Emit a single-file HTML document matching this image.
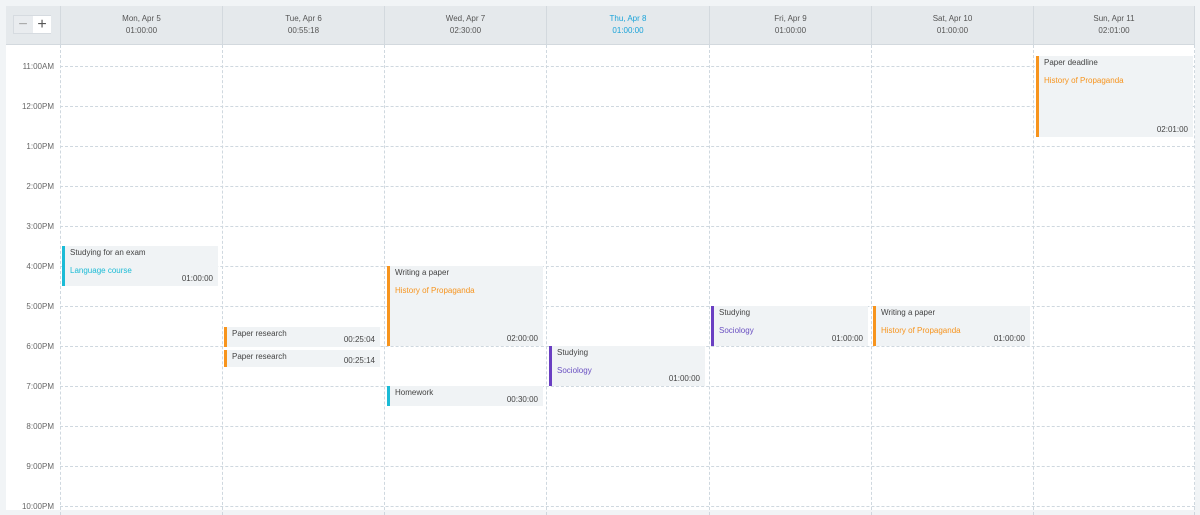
<!DOCTYPE html>
<html><head><style>
body{margin:0;width:1200px;height:510px;overflow:hidden;background:#f1f4f6;font-family:"Liberation Sans",sans-serif;position:relative}
.wrap{position:absolute;left:6px;top:6px;width:1189px;height:504px;background:#fff}
.hdr{position:absolute;left:0;top:0;width:1189px;height:38px;background:#e5e9ec;border-bottom:1px solid #d3d9de}
.hc{position:absolute;top:0;height:38px;border-left:1px solid #d3d9de;text-align:center;font-size:8px;color:#555;line-height:12px;padding-top:7px;box-sizing:border-box}
.hc.t{color:#1aa3d9}
.vl{position:absolute;top:39px;height:470px;border-left:1px dashed #cfd8df}
.hl{position:absolute;left:54px;width:1135px;border-top:1px dashed #cfd8df}
.tl{position:absolute;left:0;width:48px;text-align:right;font-size:8px;color:#666}
.ev{position:absolute;background:#f0f3f5;box-sizing:border-box;border-left:3px solid;font-size:8px;color:#444}
.ev .a{position:absolute;left:5px;top:2px}
.ev .b{position:absolute;left:5px;top:20px}
.ev .d{position:absolute;right:5px;bottom:3px}
.o{border-color:#f7941d}.o .b{color:#f7941d}
.c{border-color:#1bbbd6}.c .b{color:#1bbbd6}
.p{border-color:#6a3fc2}.p .b{color:#6a50c2}
.zm{position:absolute;left:7px;top:9px;width:38px;height:19px;border:1px solid #d6dbe0;background:#e9ecef;box-sizing:border-box}
.zm span{position:absolute;top:0;width:18px;height:17px;text-align:center;line-height:17px;font-size:16px}
</style></head><body>
<div class="wrap">
<div class="hdr">
<div class="zm"><span style="left:0;color:#aaa">−</span><span style="left:19px;background:#fff;color:#555">+</span></div>
<div class="hc" style="left:54px;width:162px">Mon, Apr 5<br>01:00:00</div>
<div class="hc" style="left:216px;width:162px">Tue, Apr 6<br>00:55:18</div>
<div class="hc" style="left:378px;width:162px">Wed, Apr 7<br>02:30:00</div>
<div class="hc t" style="left:540px;width:163px">Thu, Apr 8<br>01:00:00</div>
<div class="hc" style="left:703px;width:162px">Fri, Apr 9<br>01:00:00</div>
<div class="hc" style="left:865px;width:162px">Sat, Apr 10<br>01:00:00</div>
<div class="hc" style="left:1027px;width:162px;border-right:1px solid #d3d9de">Sun, Apr 11<br>02:01:00</div>
</div>
<div class="vl" style="left:54px"></div><div class="vl" style="left:216px"></div><div class="vl" style="left:378px"></div><div class="vl" style="left:540px"></div><div class="vl" style="left:703px"></div><div class="vl" style="left:865px"></div><div class="vl" style="left:1027px"></div><div class="vl" style="left:1188px"></div>
<div class="hl" style="top:60px"></div><div class="hl" style="top:100px"></div><div class="hl" style="top:140px"></div><div class="hl" style="top:180px"></div><div class="hl" style="top:220px"></div><div class="hl" style="top:260px"></div><div class="hl" style="top:300px"></div><div class="hl" style="top:340px"></div><div class="hl" style="top:380px"></div><div class="hl" style="top:420px"></div><div class="hl" style="top:460px"></div><div class="hl" style="top:500px"></div>
<div class="tl" style="top:56px">11:00AM</div><div class="tl" style="top:96px">12:00PM</div><div class="tl" style="top:136px">1:00PM</div><div class="tl" style="top:176px">2:00PM</div><div class="tl" style="top:216px">3:00PM</div><div class="tl" style="top:256px">4:00PM</div><div class="tl" style="top:296px">5:00PM</div><div class="tl" style="top:336px">6:00PM</div><div class="tl" style="top:376px">7:00PM</div><div class="tl" style="top:416px">8:00PM</div><div class="tl" style="top:456px">9:00PM</div><div class="tl" style="top:496px">10:00PM</div>
</div>
<div class="ev o" style="left:1036px;top:56px;width:157px;height:81px"><span class="a">Paper deadline</span><span class="b">History of Propaganda</span><span class="d">02:01:00</span></div>
<div class="ev c" style="left:62px;top:246px;width:156px;height:40px"><span class="a">Studying for an exam</span><span class="b">Language course</span><span class="d">01:00:00</span></div>
<div class="ev o" style="left:224px;top:327px;width:156px;height:20px"><span class="a">Paper research</span><span class="d">00:25:04</span></div>
<div class="ev o" style="left:224px;top:350px;width:156px;height:17px"><span class="a" style="top:2px">Paper research</span><span class="d" style="bottom:2px">00:25:14</span></div>
<div class="ev o" style="left:387px;top:266px;width:156px;height:80px"><span class="a">Writing a paper</span><span class="b">History of Propaganda</span><span class="d">02:00:00</span></div>
<div class="ev c" style="left:387px;top:386px;width:156px;height:20px"><span class="a">Homework</span><span class="d" style="bottom:2px">00:30:00</span></div>
<div class="ev p" style="left:549px;top:346px;width:156px;height:40px"><span class="a">Studying</span><span class="b">Sociology</span><span class="d">01:00:00</span></div>
<div class="ev p" style="left:711px;top:306px;width:157px;height:40px"><span class="a">Studying</span><span class="b">Sociology</span><span class="d">01:00:00</span></div>
<div class="ev o" style="left:873px;top:306px;width:157px;height:40px"><span class="a">Writing a paper</span><span class="b">History of Propaganda</span><span class="d">01:00:00</span></div>
</body></html>
